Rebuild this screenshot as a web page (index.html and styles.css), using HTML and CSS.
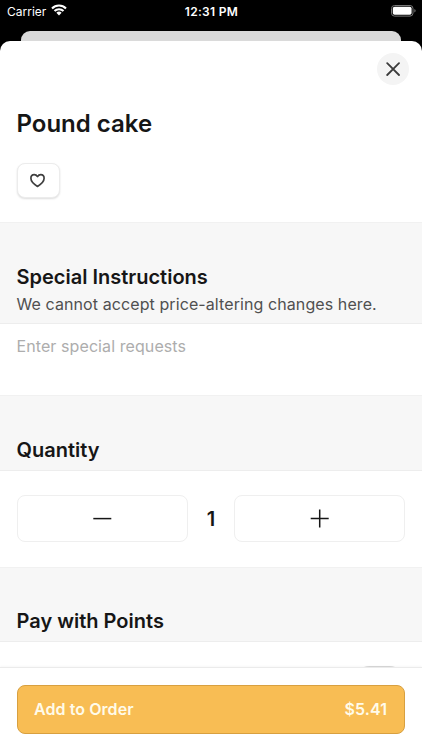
FILE: index.html
```
<!DOCTYPE html>
<html lang="en">
<head>
<meta charset="utf-8">
<title>Pound cake</title>
<link rel="stylesheet" href="styles.css">
</head>
<body>
<div class="phone">
  <header class="status">
    <div class="carrier"><span class="carrier-name">Carrier</span>
      <svg class="wifi" width="16" height="12" viewBox="0 0 16 12"><g fill="none" stroke="#fff" stroke-width="2.1"><path d="M1 4.4a10 10 0 0 1 14 0"/><path d="M3.5 7.1a6.4 6.4 0 0 1 9 0"/></g><path fill="#fff" d="M5.4 8.8a3.8 3.8 0 0 1 5.2 0L8 11.5z"/></svg>
    </div>
    <span class="time">12:31 PM</span>
    <svg class="battery" width="25" height="12" viewBox="0 0 25 12"><rect x=".5" y=".5" width="21.5" height="10.6" rx="3" fill="none" stroke="#777"/><rect x="1.8" y="1.8" width="18.8" height="8" rx="1.8" fill="#fff"/><path d="M23.4 4v3.6q1.2-.5 1.2-1.8T23.4 4" fill="#777"/></svg>
  </header>
  <div class="back-sheet"></div>
  <main class="sheet">
    <section class="intro">
      <button class="close" aria-label="Close"><svg width="14" height="14" viewBox="0 0 14 14"><path d="M1.2 1.2l11.8 11.8M13 1.2L1.2 13" stroke="#3c3c3c" stroke-width="1.8" stroke-linecap="round"/></svg></button>
      <h1>Pound cake</h1>
      <button class="favorite" aria-label="Favorite"><svg width="16" height="15" viewBox="0 0 16 15"><path d="M7.5 13.4C5.2 12 .9 8.8.9 5.3.9 3.1 2.3 1.6 4.2 1.6 5.7 1.6 6.8 2.4 7.5 3.6 8.2 2.4 9.3 1.6 10.8 1.6c1.9 0 3.3 1.5 3.3 3.7 0 3.5-4.3 6.7-6.6 8.1z" fill="none" stroke="#404040" stroke-width="1.7" stroke-linejoin="round"/></svg></button>
    </section>
    <div class="heading heading-note"><h2 class="h-special">Special Instructions</h2><p>We cannot accept price-altering changes here.</p></div>
    <div class="request">Enter special requests</div>
    <div class="heading"><h2 class="h-quantity">Quantity</h2></div>
    <div class="stepper">
      <button class="step" aria-label="Decrease"><svg width="20" height="20" viewBox="0 0 20 20"><path d="M.3 9.6h18" stroke="#161616" stroke-width="1.5"/></svg></button>
      <span class="count">1</span>
      <button class="step" aria-label="Increase"><svg width="20" height="20" viewBox="0 0 20 20"><path d="M.7 9.6h18M9.7.6v18" stroke="#161616" stroke-width="1.5"/></svg></button>
    </div>
    <div class="heading heading-points"><h2 class="h-points">Pay with Points</h2></div>
    <div class="points"><div class="switch"></div></div>
  </main>
  <footer class="footer"><button class="order"><span class="order-label">Add to Order</span><span class="price">$5.41</span></button></footer>
</div>
</body>
</html>
```
FILE: styles.css
```
* { box-sizing: border-box; }
body { margin: 0; background: #000; font-family: Inter, sans-serif; color: #161616; }
button { font: inherit; padding: 0; display: flex; align-items: center; justify-content: center; }
h1, h2, p { margin: 0; font-weight: 600; white-space: nowrap; }
.phone { width: 422px; height: 750px; overflow: hidden; display: flex; flex-direction: column; }
.status { height: 31px; flex: none; display: grid; grid-template-columns: 1fr auto 1fr; padding: 4px 6px 0 7px; align-items: start; color: #fff; }
.carrier { display: flex; gap: 5px; font-size: 12px; line-height: 15px; }
.wifi { margin-top: 0; }
.time { font-size: 12px; line-height: 15px; font-weight: 600; letter-spacing: .3px; }
.battery { justify-self: end; margin-top: 1px; }
.back-sheet { height: 10px; flex: none; margin: 0 21px; background: #dadada; border-radius: 9px 9px 0 0; }
.sheet { height: 626px; flex: none; overflow: hidden; background: #fff; border-radius: 10px 10px 0 0; }
.intro { height: 181px; padding: 12px 13px 0 16.5px; display: flex; flex-direction: column; align-items: flex-start; }
.close { align-self: flex-end; width: 32px; height: 32px; flex: none; border: 0; border-radius: 50%; background: #f4f4f4; }
h1 { font-size: 24px; line-height: 30px; margin-top: 24px; }
.favorite { width: 43px; height: 35px; margin-top: 24px; border: 1px solid #ececec; border-radius: 8px; background: #fff; box-shadow: 0 1px 2px #0002; }
.heading { height: 76px; padding: 41px 16.5px 0; background: #f7f7f7; border-top: 1px solid #f1f1f1; border-bottom: 1px solid #ededed; }
.heading-note { height: 102px; }
.heading-points { height: 75px; padding-top: 40px; }
h2 { font-size: 20px; line-height: 26px; }
.heading p { font-size: 16px; line-height: 22px; margin-top: 3px; font-weight: 400; color: #505050; letter-spacing: .09px; }
.request { height: 71px; padding: 11px 16.5px; font-size: 16px; line-height: 22px; color: #adadad; letter-spacing: .09px; }
.stepper { height: 96px; padding: 24px 17px 0; display: grid; grid-template-columns: 171px 1fr 171px; align-items: start; }
.step { height: 47px; border: 1px solid #efefef; border-radius: 8px; background: #fff; }
.count { text-align: center; font-size: 20px; line-height: 49px; font-weight: 600; }
.points { height: 27px; display: flex; justify-content: flex-end; align-items: flex-start; padding: 24px 17px 0; }
.switch { flex: none; width: 51px; height: 31px; border-radius: 16px; background: #d8d8d8; }
.footer { height: 83px; flex: none; padding: 17px 17px 0; background: #fff; border-top: 1px solid #ebebeb; box-shadow: 0 -1px 2px #00000008; position: relative; }
.order { width: 100%; height: 49px; padding: 0 17px 2px 16px; justify-content: space-between; border: 1px solid #d8a040; border-radius: 8px; background: #f8bd54; color: #fffbea; font-size: 16px; font-weight: 600; letter-spacing: .07px; }
```
